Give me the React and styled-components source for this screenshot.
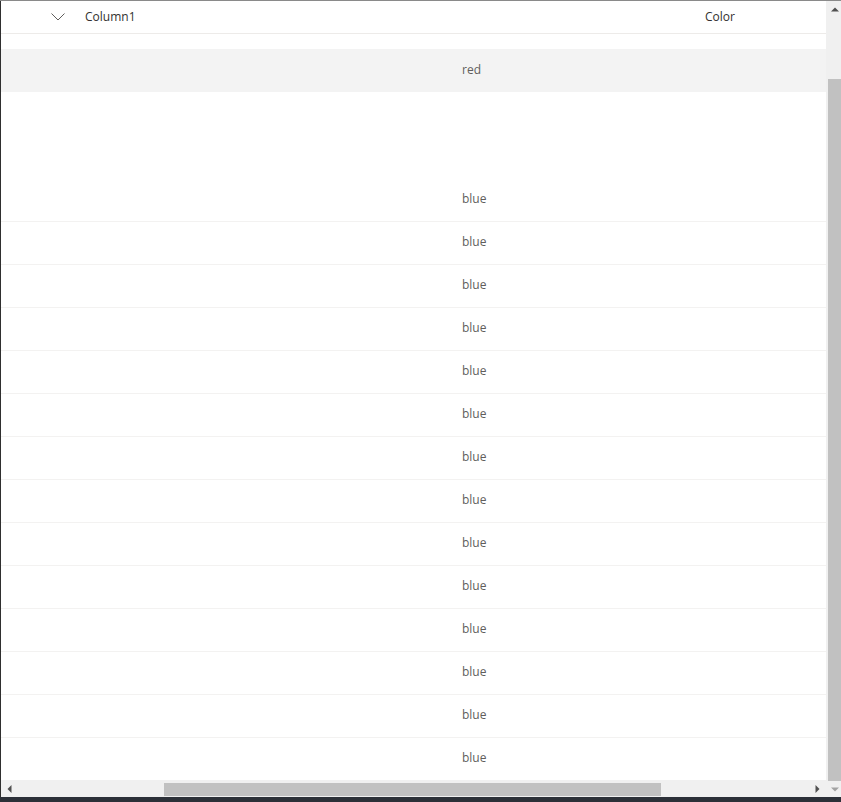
import React from 'react'
import styled, { createGlobalStyle } from 'styled-components'

const GlobalStyle = createGlobalStyle`
    html, body {
        margin: 0;
        padding: 0;
        background: #ffffff;
    }
    body {
        font-family: "Open Sans", "Noto Sans", sans-serif;
    }
`

const rows = [
    { id: 'r0', color: 'red', selected: true },
    { id: 'gap', blank: true },
    ...Array.from({ length: 14 }, (_, i) => ({ id: `b${i}`, color: 'blue' })),
]

const ChevronDown = () => (
    <svg width='14' height='8' viewBox='0 0 14 8'>
        <polyline points='0.5,0.5 7,7 13.5,0.5' fill='none' stroke='#605e5c' strokeWidth='1' />
    </svg>
)

const Arrow = ({ dir, disabled }) => {
    const pts = {
        up: '0,4 4,0 8,4',
        down: '0,0 8,0 4,4',
        left: '4,0 4,8 0,4',
        right: '0,0 0,8 4,4',
    }[dir]
    const horiz = dir === 'left' || dir === 'right'
    return (
        <svg width={horiz ? 5 : 8} height={horiz ? 8 : 5} viewBox={horiz ? '0 0 4 8' : '0 0 8 4'}>
            <polygon points={pts} fill={disabled ? '#a3a3a3' : '#505050'} />
        </svg>
    )
}

export default function App() {
    return (
        <>
            <GlobalStyle />
            <Page>
                <TopLine />
                <Frame>
                    <LeftEdge />
                    <Main>
                        <Grid>
                            <HeaderRow>
                                <ChevronCell><ChevronDown /></ChevronCell>
                                <HeaderTitle>Column1</HeaderTitle>
                                <HeaderTitle $right>Color</HeaderTitle>
                            </HeaderRow>
                            <Spacer />
                            {rows.map(row => row.blank
                                ? <BlankBlock key={row.id} />
                                : (
                                    <Row key={row.id} $selected={row.selected}>
                                        <Cell $selected={row.selected}>{row.color}</Cell>
                                    </Row>
                                )
                            )}
                        </Grid>
                        <HScroll>
                            <ArrowBox $w={16}><Arrow dir='left' /></ArrowBox>
                            <HTrack>
                                <HThumb />
                            </HTrack>
                            <ArrowBox $w={17}><Arrow dir='right' /></ArrowBox>
                        </HScroll>
                    </Main>
                    <VScroll>
                        <VArrowBox><Arrow dir='up' /></VArrowBox>
                        <VTrack>
                            <VThumb />
                        </VTrack>
                        <VArrowBox><Arrow dir='down' disabled /></VArrowBox>
                    </VScroll>
                </Frame>
                <BottomStrip />
            </Page>
        </>
    )
}

const Page = styled.div`
    width: 841px;
    height: 802px;
    display: flex;
    flex-direction: column;
    overflow: hidden;
`

const TopLine = styled.div`
    height: 1px;
    background: #8a8a8a;
    flex-shrink: 0;
`

const Frame = styled.div`
    flex: 1;
    display: flex;
    min-height: 0;
`

const LeftEdge = styled.div`
    width: 1px;
    background: #2f2f2f;
    flex-shrink: 0;
`

const Main = styled.div`
    flex: 1;
    display: flex;
    flex-direction: column;
    min-width: 0;
`

const Grid = styled.div`
    flex: 1;
    overflow: hidden;
    background: #ffffff;
`

const HeaderRow = styled.div`
    height: 32px;
    display: flex;
    align-items: center;
    border-bottom: 1px solid #edebe9;
    color: #323130;
    font-size: 12px;
`

const ChevronCell = styled.div`
    width: 84px;
    padding-left: 50px;
    box-sizing: border-box;
    display: flex;
    align-items: center;
    height: 100%;
    padding-bottom: 1px;
`

const HeaderTitle = styled.div`
    width: ${p => p.$right ? 'auto' : '620px'};
    white-space: nowrap;
    padding-bottom: 2px;
`

const Spacer = styled.div`
    height: 15px;
`

const BlankBlock = styled.div`
    height: 87px;
`

const Row = styled.div`
    height: 43px;
    box-sizing: border-box;
    display: flex;
    align-items: center;
    background: ${p => p.$selected ? '#f3f3f3' : '#ffffff'};
    border-bottom: 1px solid ${p => p.$selected ? 'transparent' : '#f3f2f1'};
    color: #605e5c;
    font-size: 12px;
`

const Cell = styled.div`
    padding-left: 461px;
    padding-bottom: ${p => p.$selected ? 1 : 3}px;
`

const HScroll = styled.div`
    height: 17px;
    flex-shrink: 0;
    display: flex;
    align-items: stretch;
    background: #f0f0f0;
`

const ArrowBox = styled.div`
    width: ${p => p.$w}px;
    display: flex;
    align-items: center;
    justify-content: center;
    flex-shrink: 0;
`

const HTrack = styled.div`
    flex: 1;
    padding: 3px 0 1px 147px;
    display: flex;
`

const HThumb = styled.div`
    width: 497px;
    background: #c1c1c1;
`

const VScroll = styled.div`
    width: 15px;
    flex-shrink: 0;
    display: flex;
    flex-direction: column;
    background: #f0f0f0;
`

const VArrowBox = styled.div`
    height: 16px;
    display: flex;
    align-items: center;
    justify-content: center;
    padding-left: 2px;
    box-sizing: border-box;
    flex-shrink: 0;
`

const VTrack = styled.div`
    flex: 1;
    padding: 62px 0 0 2px;
    display: flex;
    flex-direction: column;
`

const VThumb = styled.div`
    flex: 1;
    background: #c1c1c1;
`

const BottomStrip = styled.div`
    height: 5px;
    flex-shrink: 0;
    background: #2c3038;
`
